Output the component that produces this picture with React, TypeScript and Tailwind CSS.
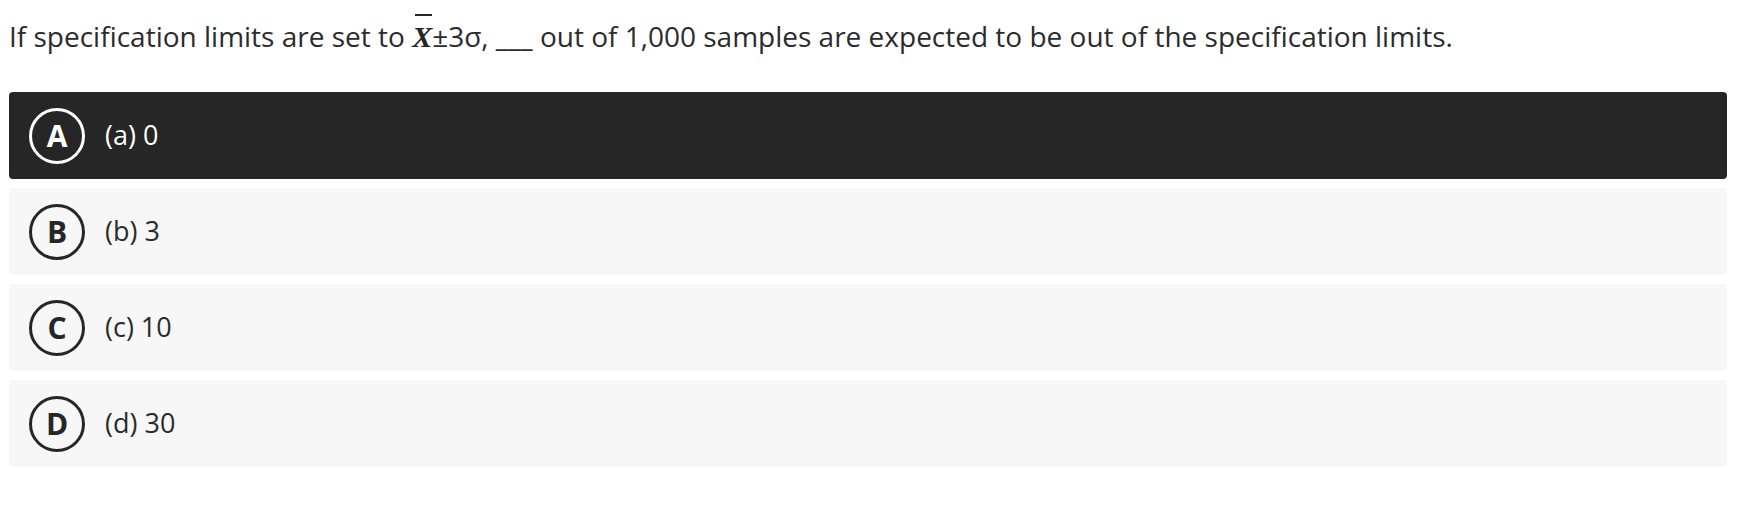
const options = [
  { letter: 'A', text: '(a) 0' },
  { letter: 'B', text: '(b) 3' },
  { letter: 'C', text: '(c) 10' },
  { letter: 'D', text: '(d) 30' },
]

export default function App() {
  const selected = 'A'

  return (
    <div className="bg-white w-[1753px] h-[507px] px-[9px] pt-[14px] text-[#2b2b2b]" style={{ fontFamily: '"Open Sans", sans-serif' }}>
      {/* Question */}
      <p className="text-[28px] leading-[44px] whitespace-nowrap">
        If specification limits are set to{' '}
        <span className="relative inline-block">
          <span className="absolute left-[3px] right-[0px] top-[0px] h-[2px] bg-[#262626]" />
          <span className="italic font-bold text-[30px] text-[#262626]" style={{ fontFamily: '"Liberation Serif", serif' }}>X</span>
        </span>
        ±3σ, ___ out of 1,000 samples are expected to be out of the specification limits.
      </p>

      {/* Options */}
      <div className="mt-[33px] flex flex-col gap-[9px] w-[1718px]">
        {options.map(o => {
          const active = o.letter === selected
          return (
            <div
              key={o.letter}
              className={
                active
                  ? 'h-[87px] rounded-[4px] bg-[#262626] text-white flex items-center pl-[20px]'
                  : 'h-[87px] rounded-[4px] bg-[#f7f7f7] text-[#2b2b2b] flex items-center pl-[20px]'
              }
            >
              <div
                className={
                  active
                    ? 'w-[56px] h-[56px] rounded-full border-[3px] border-white flex items-center justify-center text-[30px] font-bold'
                    : 'w-[56px] h-[56px] rounded-full border-[3px] border-[#262626] text-[#262626] flex items-center justify-center text-[30px] font-bold'
                }
              >
                {o.letter}
              </div>
              <span className="ml-[20px] text-[27px]">{o.text}</span>
            </div>
          )
        })}
      </div>
    </div>
  )
}
